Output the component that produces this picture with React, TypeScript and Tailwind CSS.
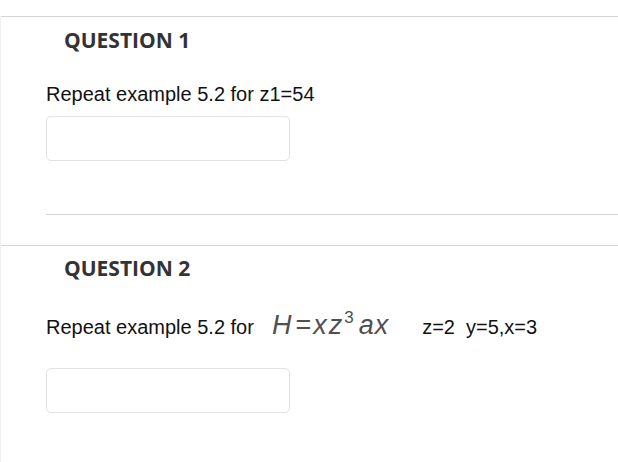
const body = "font-['Liberation_Sans',Arial,sans-serif]";
const heading = "font-['Open_Sans',sans-serif] font-bold text-[21px] leading-[28px] text-[#333]";

const AnswerBox = ({ className = "" }: { className?: string }) => (
  <input
    type="text"
    className={`block w-[244px] h-[45px] rounded-[5px] border border-[#e2e2e2] bg-white outline-none ${className}`}
  />
);

// H = xz^3 ax, set like the rendered formula image
const Equation = () => (
  <span className="ml-[18px] inline-flex items-baseline font-['Liberation_Sans',Arial,sans-serif] text-[#505050] text-[27px] leading-none">
    <i className="font-normal">H</i>
    <span className="ml-[4px] mr-[2px]">=</span>
    <i className="font-normal tracking-[2px]">xz</i>
    <span className="relative -top-[11px] text-[17px]">3</span>
    <i className="ml-[5px] font-normal tracking-[1px]">ax</i>
  </span>
);

export default function App() {
  return (
    <div className="min-h-[462px] w-full bg-white pt-4">
      <div className="h-[446px] border-l border-[#f0f0f0]">
        {/* question 1 */}
        <section className="border-t border-[#d4d4d4]">
          <h2 className={`${heading} pl-[63px] pt-[9px]`}>QUESTION 1</h2>
          <div className={`${body} pl-[45px] mt-[26px]`}>
            <p className="text-[20px] leading-[28px] text-[#111]">Repeat example 5.2 for z1=54</p>
            <AnswerBox className="mt-[8px]" />
            <div className="mt-[53px] border-t border-[#d4d4d4]" />
          </div>
          <div className="h-[30px]" />
        </section>

        {/* question 2 */}
        <section className="border-t border-[#d4d4d4]">
          <h2 className={`${heading} pl-[63px] pt-[8px]`}>QUESTION 2</h2>
          <div className={`${body} pl-[45px] mt-[30px]`}>
            <p className="flex items-baseline h-[34px] text-[20px] leading-[28px] text-[#111]">
              <span>Repeat example 5.2 for</span>
              <Equation />
              <span className="ml-[33px]">z=2</span>
              <span className="ml-[11px]">y=5,x=3</span>
            </p>
            <AnswerBox className="mt-[22px]" />
          </div>
        </section>
      </div>
    </div>
  );
}
